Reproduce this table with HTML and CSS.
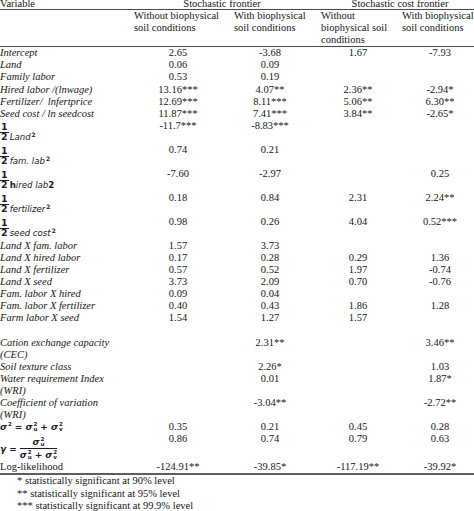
FILE: index.html
```html
<!DOCTYPE html>
<html>
<head>
<meta charset="utf-8">
<link rel="stylesheet" href="styles.css">
</head>
<body>
<table class="tbl">
  <colgroup>
    <col class="c0"><col class="c1"><col class="c2"><col class="c3"><col class="c4">
  </colgroup>
  <thead>
    <tr class="top">
      <th class="var">Variable</th>
      <th colspan="2" class="grp">Stochastic frontier</th>
      <th colspan="2" class="grp grp2">Stochastic cost frontier</th>
    </tr>
    <tr class="sub">
      <th class="blank"></th>
      <th class="h1">Without biophysical<br>soil conditions</th>
      <th class="h2">With biophysical<br>soil conditions</th>
      <th class="h3">Without<br>biophysical soil<br>conditions</th>
      <th class="h4">With biophysical<br>soil conditions</th>
    </tr>
  </thead>
  <tbody>
    <tr><td class="v">Intercept</td><td>2.65</td><td>-3.68</td><td>1.67</td><td>-7.93</td></tr>
    <tr><td class="v">Land</td><td>0.06</td><td>0.09</td><td></td><td></td></tr>
    <tr><td class="v">Family labor</td><td>0.53</td><td>0.19</td><td></td><td></td></tr>
    <tr><td class="v">Hired labor /(lnwage)</td><td>13.16***</td><td>4.07**</td><td>2.36**</td><td>-2.94*</td></tr>
    <tr><td class="v">Fertilizer/&nbsp; lnfertprice</td><td>12.69***</td><td>8.11***</td><td>5.06**</td><td>6.30**</td></tr>
    <tr><td class="v">Seed cost / ln seedcost</td><td>11.87***</td><td>7.41***</td><td>3.84**</td><td>-2.65*</td></tr>
    <tr class="fr"><td><div class="m"><span class="frac"><span class="num">1</span><span>2</span></span><span class="mt">Land<b class="sq">2</b></span></div></td><td>-11.7***</td><td>-8.83***</td><td></td><td></td></tr>
    <tr class="fr"><td><div class="m"><span class="frac"><span class="num">1</span><span>2</span></span><span class="mt">fam. lab<b class="sq">2</b></span></div></td><td>0.74</td><td>0.21</td><td></td><td></td></tr>
    <tr class="fr"><td><div class="m"><span class="frac"><span class="num">1</span><span>2</span></span><span class="mt"><b class="up">h</b>ired lab<b class="up">2</b></span></div></td><td>-7.60</td><td>-2.97</td><td></td><td>0.25</td></tr>
    <tr class="fr"><td><div class="m"><span class="frac"><span class="num">1</span><span>2</span></span><span class="mt">fertilizer<b class="sq">2</b></span></div></td><td>0.18</td><td>0.84</td><td>2.31</td><td>2.24**</td></tr>
    <tr class="fr"><td><div class="m"><span class="frac"><span class="num">1</span><span>2</span></span><span class="mt">seed cost<b class="sq">2</b></span></div></td><td>0.98</td><td>0.26</td><td>4.04</td><td>0.52***</td></tr>
    <tr><td class="v">Land X fam. labor</td><td>1.57</td><td>3.73</td><td></td><td></td></tr>
    <tr><td class="v">Land X hired labor</td><td>0.17</td><td>0.28</td><td>0.29</td><td>1.36</td></tr>
    <tr><td class="v">Land X fertilizer</td><td>0.57</td><td>0.52</td><td>1.97</td><td>-0.74</td></tr>
    <tr><td class="v">Land X seed</td><td>3.73</td><td>2.09</td><td>0.70</td><td>-0.76</td></tr>
    <tr><td class="v">Fam. labor X hired</td><td>0.09</td><td>0.04</td><td></td><td></td></tr>
    <tr><td class="v">Fam. labor X fertilizer</td><td>0.40</td><td>0.43</td><td>1.86</td><td>1.28</td></tr>
    <tr><td class="v">Farm labor X seed</td><td>1.54</td><td>1.27</td><td>1.57</td><td></td></tr>
    <tr><td class="v">&nbsp;</td><td></td><td></td><td></td><td></td></tr>
    <tr><td class="v">Cation exchange capacity<br>(CEC)</td><td></td><td>2.31**</td><td></td><td>3.46**</td></tr>
    <tr><td class="v">Soil texture class</td><td></td><td>2.26*</td><td></td><td>1.03</td></tr>
    <tr><td class="v">Water requirement Index<br>(WRI)</td><td></td><td>0.01</td><td></td><td>1.87*</td></tr>
    <tr><td class="v">Coefficient of variation<br>(WRI)</td><td></td><td>-3.04**</td><td></td><td>-2.72**</td></tr>
    <tr class="sig"><td><div class="eq"><span class="sg">σ<span class="ss"><i>2</i></span></span><span class="op">=</span><span class="sg">σ<span class="ss"><i>2</i><i>u</i></span></span><span class="op">+</span><span class="sg">σ<span class="ss"><i>2</i><i>v</i></span></span></div></td><td>0.35</td><td>0.21</td><td>0.45</td><td>0.28</td></tr>
    <tr class="gam"><td><div class="eq2"><span class="sg">γ</span><span class="op">=</span><span class="bfrac"><span class="bnum"><span class="sg">σ<span class="ss"><i>2</i><i>u</i></span></span></span><span class="bden"><span class="sg">σ<span class="ss"><i>2</i><i>u</i></span></span><span class="op">+</span><span class="sg">σ<span class="ss"><i>2</i><i>v</i></span></span></span></span></div></td><td>0.86</td><td>0.74</td><td>0.79</td><td>0.63</td></tr>
    <tr class="last"><td class="ll">Log-likelihood</td><td>-124.91**</td><td>-39.85*</td><td>-117.19**</td><td>-39.92*</td></tr>
  </tbody>
</table>
<div class="notes">
  <div>* statistically significant at 90% level</div>
  <div>** statistically significant at 95% level</div>
  <div>*** statistically significant at 99.9% level</div>
</div>
</body>
</html>
```

FILE: styles.css
```css
html, body {
  margin: 0;
  padding: 0;
  overflow: hidden;
  background: #ffffff;
}
body {
  width: 474px;
  height: 511px;
  font-family: "Liberation Serif", "Times New Roman", serif;
  font-size: 10.5px;
  color: #161616;
}
.tbl {
  margin-top: -1px;
  width: 478px;
  table-layout: fixed;
  border-collapse: separate;
  border-spacing: 0;
  line-height: 12.1px;
}
.c0 { width: 130px; }
.c1 { width: 96px; }
.c2 { width: 88px; }
.c3 { width: 88px; }
.c4 { width: 76px; }
th, td {
  padding: 0;
  font-weight: normal;
  white-space: nowrap;
  vertical-align: top;
}
td { text-align: center; }
th { text-align: left; }
.top th {
  line-height: 10px;
  height: 10px;
  border-bottom: 1px solid #4a4a4a;
}
.top .grp { text-align: center; }
.top .grp2 { padding-left: 8px; }
.sub th { border-bottom: 1px solid #4a4a4a; }
.sub .h1 { padding-left: 4px; }
.sub .h2 { padding-left: 8px; }
.sub .h3 { padding-left: 7px; }
.sub .h4 { padding-left: 0; }
td.v {
  text-align: left;
  font-style: italic;
}
td.ll { text-align: left; }
.fr td { height: 24px; }
.fr td:first-child { text-align: left; }
.m {
  display: flex;
  align-items: flex-end;
  gap: 1px;
  height: 22px;
  padding-top: 2px;
  font-family: "DejaVu Sans", sans-serif;
  color: #1b1b2a;
  line-height: 8px;
}
.frac {
  display: inline-flex;
  flex-direction: column;
  align-items: center;
  font-size: 9.5px;
  font-weight: bold;
  line-height: 8px;
  margin-bottom: 3px;
}
.frac .num {
  border-bottom: 1.5px solid #1b1b2a;
  padding: 0 1px 0.5px;
}
.mt {
  font-size: 8.6px;
  font-style: italic;
  line-height: 10px;
  margin-bottom: 2px;
}
.sq {
  font-size: 6px;
  font-style: normal;
  vertical-align: 3px;
  margin-left: 1px;
}
.up {
  font-style: normal;
  font-weight: bold;
}
.eq, .eq2 {
  display: flex;
  align-items: center;
  font-family: "DejaVu Sans", sans-serif;
  font-size: 9px;
  font-style: italic;
  font-weight: bold;
  color: #1b1b2a;
  text-align: left;
  gap: 3px;
  line-height: 10px;
}
.sig td { height: 12px; }
.eq { height: 12px; }
.sg {
  display: inline-flex;
  align-items: flex-start;
  line-height: 10px;
}
.ss {
  display: inline-flex;
  flex-direction: column;
  font-size: 5.5px;
  line-height: 5px;
  margin-left: 1px;
}
.ss i { font-style: normal; }
.op {
  font-style: normal;
  font-weight: bold;
}
.gam td { height: 28px; }
.eq2 {
  height: 25px;
  padding-top: 3px;
}
.bfrac {
  display: inline-flex;
  flex-direction: column;
  align-items: center;
}
.bnum {
  display: flex;
  justify-content: center;
  border-bottom: 1.5px solid #1b1b2a;
  padding: 0 1px 1px;
  align-self: stretch;
}
.bden {
  display: flex;
  gap: 3px;
  padding-top: 1px;
}
.last td {
  border-bottom: 2px solid #5e5e5e;
}
.notes {
  padding-left: 17px;
  line-height: 12.5px;
}
```
